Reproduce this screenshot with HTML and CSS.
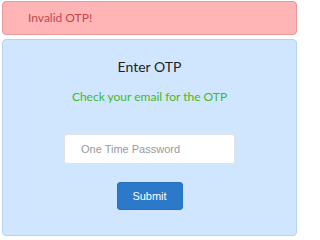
FILE: index.html
```html
<!DOCTYPE html>
<html>
<head>
<meta charset="utf-8">
<link rel="stylesheet" href="styles.css">
</head>
<body>
<div class="page">
  <div class="alert">Invalid OTP!</div>
  <div class="panel">
    <h1 class="title">Enter OTP</h1>
    <p class="hint">Check your email for the OTP</p>
    <input class="otp" type="text" placeholder="One Time Password">
    <button class="submit" type="button">Submit</button>
  </div>
</div>
</body>
</html>
```
FILE: styles.css
```css
html, body {
  margin: 0;
  padding: 0;
  background: #ffffff;
}
.page {
  width: 300px;
  height: 239px;
  box-sizing: border-box;
  padding: 1px 3px 0 2px;
  display: flex;
  flex-direction: column;
  gap: 4px;
  font-family: Lato, "Open Sans", sans-serif;
}
.alert {
  height: 34px;
  box-sizing: border-box;
  border: 1px solid #e69a9c;
  border-radius: 4px;
  background: #ffb4b5;
  color: #c2494b;
  font-size: 12px;
  line-height: 32px;
  padding-left: 25px;
}
.panel {
  height: 197px;
  box-sizing: border-box;
  border: 1px solid #b7d3f1;
  border-radius: 4px;
  background: #d0e6fe;
  display: flex;
  flex-direction: column;
  align-items: center;
}
.title {
  margin: 17px 0 0;
  font-size: 14px;
  font-weight: 400;
  line-height: 20px;
  color: #1f1f1f;
}
.hint {
  margin: 12px 0 0;
  font-size: 12px;
  line-height: 16px;
  color: #44b82a;
}
.otp {
  margin-top: 29px;
  width: 171px;
  height: 30px;
  box-sizing: border-box;
  border: 1px solid #dfe3e8;
  border-radius: 3px;
  background: #ffffff;
  padding: 0 0 0 16px;
  font-family: "Liberation Sans", Arial, sans-serif;
  font-size: 11px;
  color: #333;
  outline: none;
}
.otp::placeholder {
  color: #9a9a9a;
}
.submit {
  margin-top: 18px;
  width: 66px;
  height: 28px;
  border: 1px solid #2a70bd;
  border-radius: 3px;
  background: #2d79c9;
  color: #ffffff;
  font-family: "Liberation Sans", Arial, sans-serif;
  font-size: 11px;
  padding: 0;
}
```
